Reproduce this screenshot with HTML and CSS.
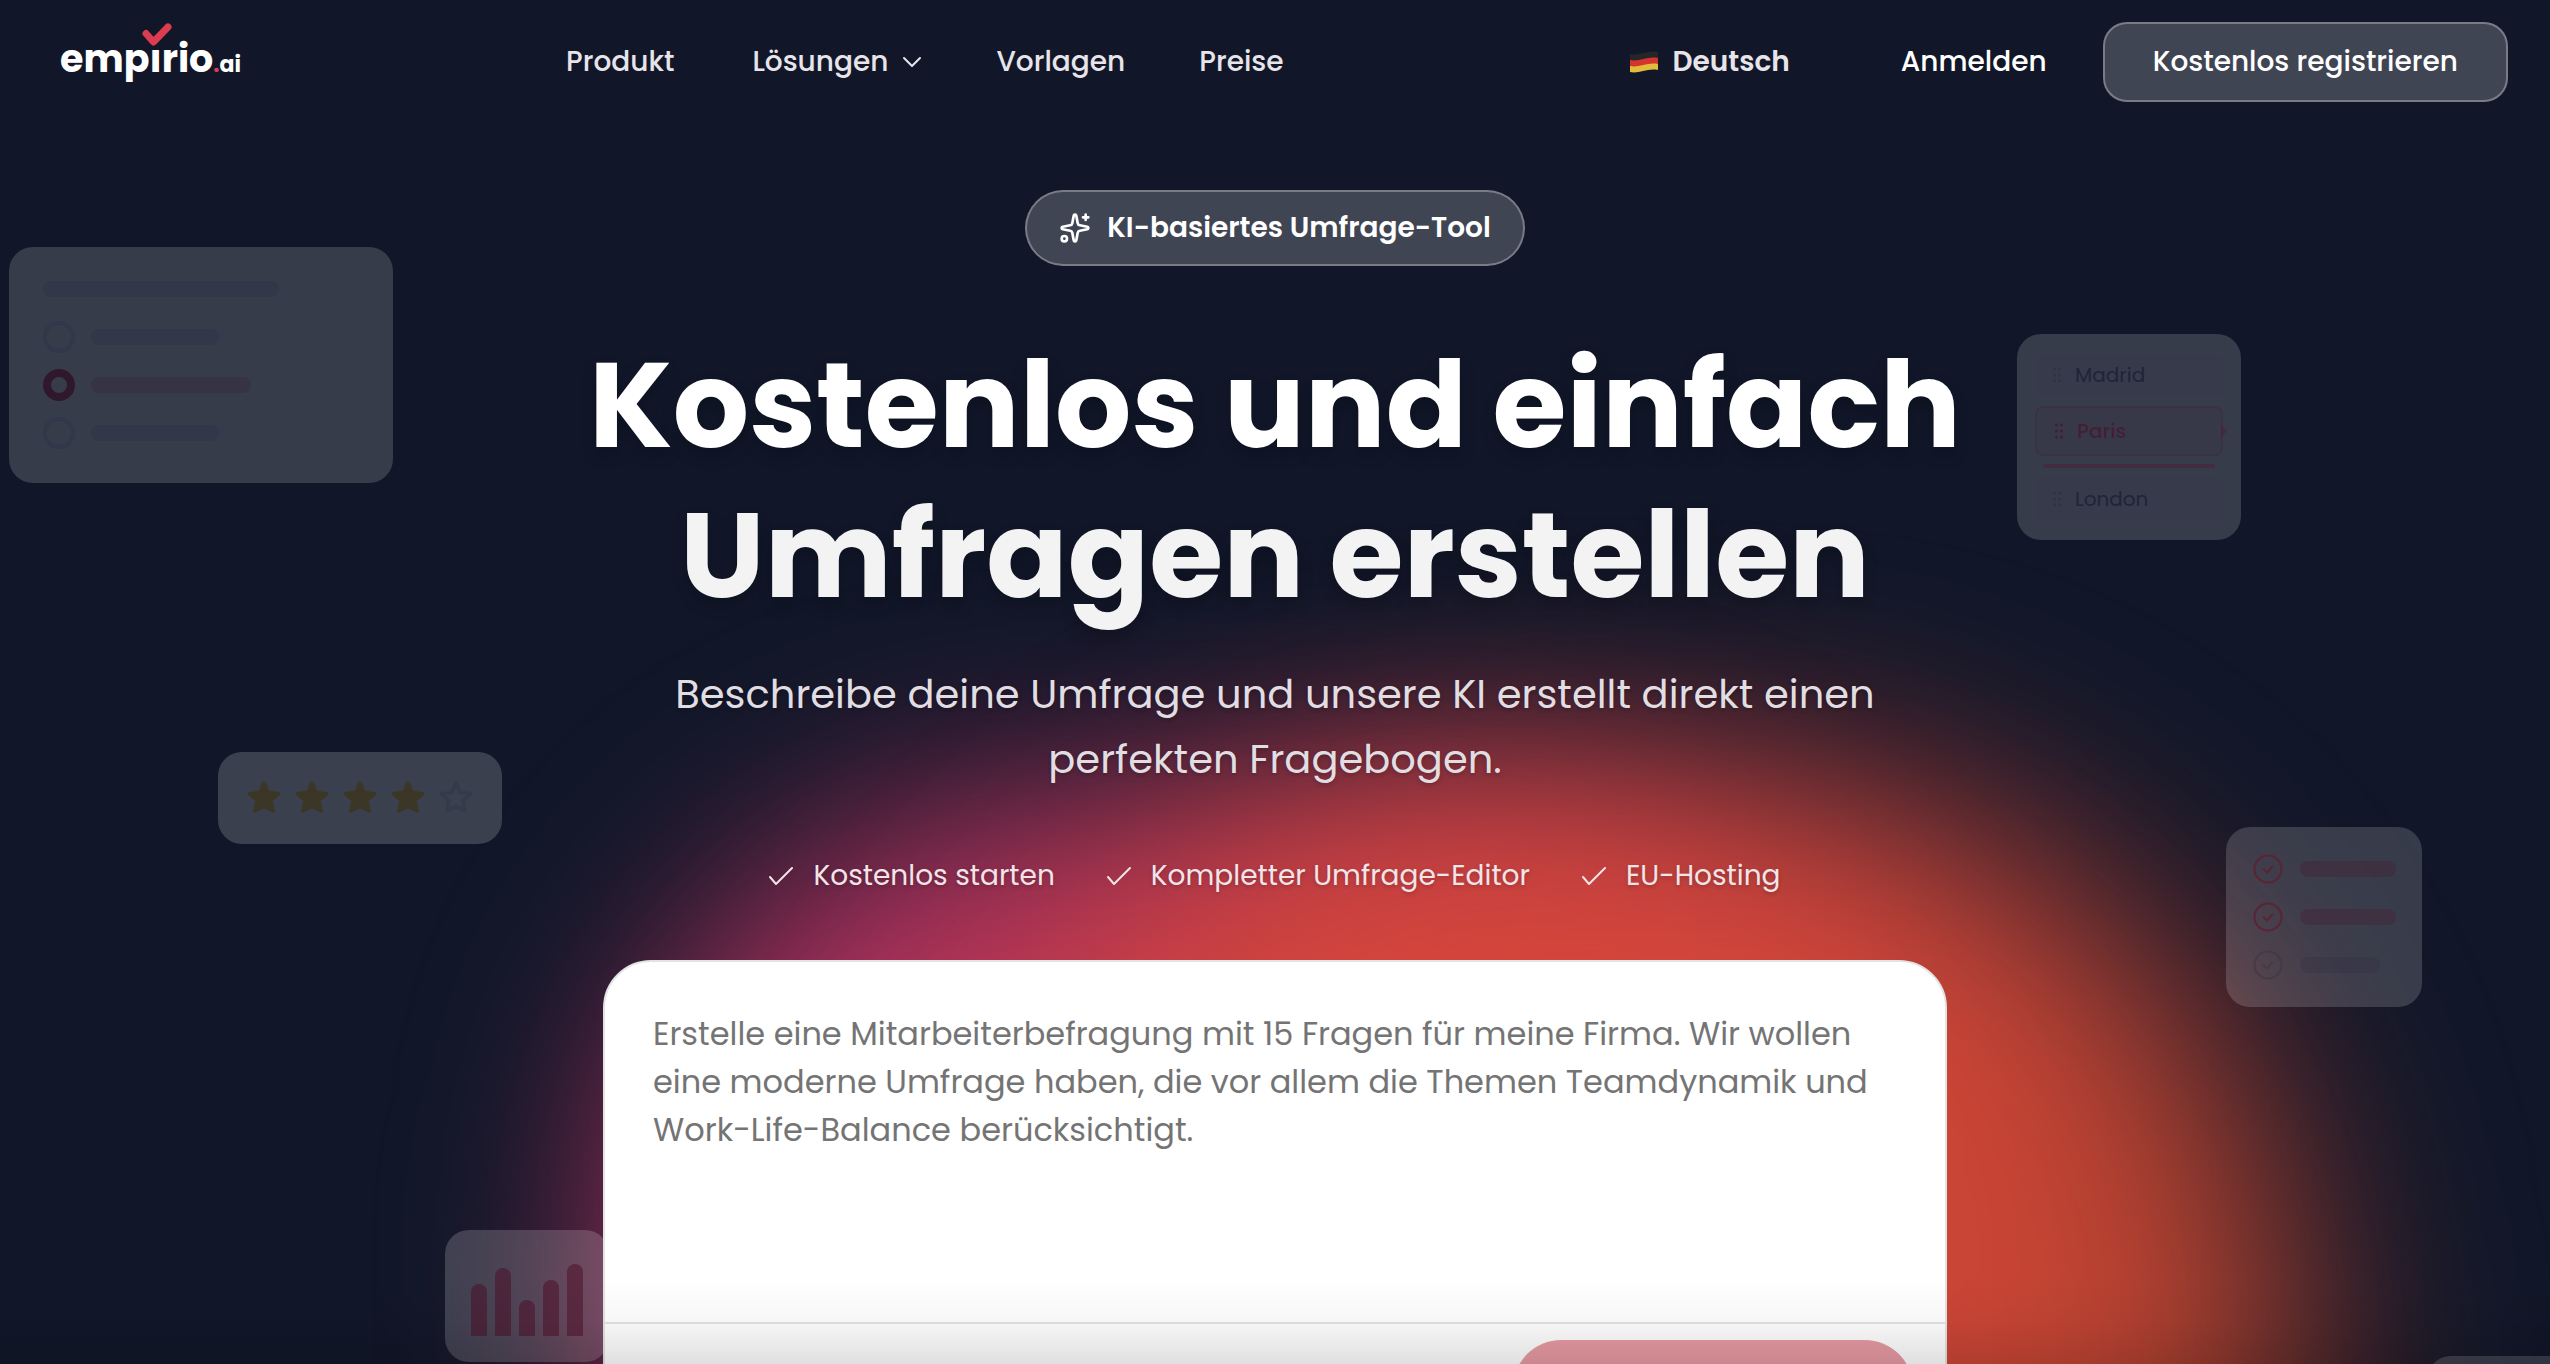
FILE: index.html
```html
<!doctype html>
<html lang="de">
  <head>
    <meta charset="utf-8" />
    <title>empirio.ai - Kostenlos und einfach Umfragen erstellen</title>
    <meta name="viewport" content="width=device-width, initial-scale=1.0" />
    <link rel="stylesheet" href="styles.css">
  </head>
  <body>
    <div class="page">
      <div class="glow" aria-hidden="true">
        <div class="glow-pink"></div>
        <div class="glow-orange"></div>
      </div>

      <!-- floating survey cards -->
      <div class="floats" aria-hidden="true">
        <div class="float float-radio">
          <div class="bar bar-title"></div>
          <div class="row"><i class="dot"></i><div class="bar"></div></div>
          <div class="row active"><i class="dot"></i><div class="bar"></div></div>
          <div class="row"><i class="dot"></i><div class="bar"></div></div>
        </div>

        <div class="float float-rank">
          <div class="rank">
            <svg width="8" height="16" viewBox="0 0 8 16"><circle cx="1.5" cy="2" r="1.5" /><circle cx="6.5" cy="2" r="1.5" /><circle cx="1.5" cy="8" r="1.5" /><circle cx="6.5" cy="8" r="1.5" /><circle cx="1.5" cy="14" r="1.5" /><circle cx="6.5" cy="14" r="1.5" /></svg>
            <span>Madrid</span>
          </div>
          <div class="rank rank-active">
            <svg width="8" height="16" viewBox="0 0 8 16"><circle cx="1.5" cy="2" r="1.5" /><circle cx="6.5" cy="2" r="1.5" /><circle cx="1.5" cy="8" r="1.5" /><circle cx="6.5" cy="8" r="1.5" /><circle cx="1.5" cy="14" r="1.5" /><circle cx="6.5" cy="14" r="1.5" /></svg>
            <span>Paris</span>
          </div>
          <div class="drop-line"></div>
          <div class="rank">
            <svg width="8" height="16" viewBox="0 0 8 16"><circle cx="1.5" cy="2" r="1.5" /><circle cx="6.5" cy="2" r="1.5" /><circle cx="1.5" cy="8" r="1.5" /><circle cx="6.5" cy="8" r="1.5" /><circle cx="1.5" cy="14" r="1.5" /><circle cx="6.5" cy="14" r="1.5" /></svg>
            <span>London</span>
          </div>
        </div>

        <div class="float float-stars">
          <svg class="star" viewBox="0 0 24 24"><path d="M12 3l2.6 5.7 6.2.7-4.6 4.2 1.3 6.2L12 16.9l-5.5 2.9 1.3-6.2-4.6-4.2 6.2-.7z" /></svg>
          <svg class="star" viewBox="0 0 24 24"><path d="M12 3l2.6 5.7 6.2.7-4.6 4.2 1.3 6.2L12 16.9l-5.5 2.9 1.3-6.2-4.6-4.2 6.2-.7z" /></svg>
          <svg class="star" viewBox="0 0 24 24"><path d="M12 3l2.6 5.7 6.2.7-4.6 4.2 1.3 6.2L12 16.9l-5.5 2.9 1.3-6.2-4.6-4.2 6.2-.7z" /></svg>
          <svg class="star" viewBox="0 0 24 24"><path d="M12 3l2.6 5.7 6.2.7-4.6 4.2 1.3 6.2L12 16.9l-5.5 2.9 1.3-6.2-4.6-4.2 6.2-.7z" /></svg>
          <svg class="star star-empty" viewBox="0 0 24 24"><path d="M12 3l2.6 5.7 6.2.7-4.6 4.2 1.3 6.2L12 16.9l-5.5 2.9 1.3-6.2-4.6-4.2 6.2-.7z" /></svg>
        </div>

        <div class="float float-checks">
          <div class="row active">
            <svg class="tick" viewBox="0 0 32 32"><circle cx="16" cy="16" r="13.5" /><path d="M11.500 16l3.500 3.500 5.500-6" /></svg>
            <div class="bar"></div>
          </div>
          <div class="row active">
            <svg class="tick" viewBox="0 0 32 32"><circle cx="16" cy="16" r="13.5" /><path d="M11.500 16l3.500 3.500 5.500-6" /></svg>
            <div class="bar"></div>
          </div>
          <div class="row">
            <svg class="tick" viewBox="0 0 32 32"><circle cx="16" cy="16" r="13.5" /><path d="M11.500 16l3.500 3.500 5.500-6" /></svg>
            <div class="bar"></div>
          </div>
        </div>

        <div class="float float-chart">
          <i style="height: 52px"></i>
          <i style="height: 68px"></i>
          <i style="height: 36px"></i>
          <i style="height: 56px"></i>
          <i style="height: 72px"></i>
        </div>

        <div class="float float-corner"></div>
      </div>

      <header class="header">
        <a href="/" class="logo">
          <svg class="logo-check" width="30" height="23" viewBox="0 0 30 23"><path d="M4 10.500l7.500 8.500L26 4" /></svg>
          <span>empırio</span><span class="logo-dot">.</span><span class="logo-ai">ai</span>
        </a>
        <nav class="nav">
          <a href="/produkt">Produkt</a>
          <a href="/loesungen" class="nav-drop">Lösungen
            <svg width="20" height="12" viewBox="0 0 20 12"><path d="M2 2l8 8 8-8" /></svg>
          </a>
          <a href="/vorlagen">Vorlagen</a>
          <a href="/preise">Preise</a>
        </nav>
        <div class="actions">
          <button type="button" class="lang">
            <svg width="28" height="22" viewBox="0 0 28 22">
              <path fill="#26262a" d="M0 3c9 2 17-4 28-2v7c-11-2-19 4-28 2z" />
              <path fill="#d3352e" d="M0 9c9 2 17-4 28-2v7c-11-2-19 4-28 2z" />
              <path fill="#e2bd3c" d="M0 15c9 2 17-4 28-2v6c-11-2-19 4-28 2z" />
            </svg>
            Deutsch
          </button>
          <a href="/login" class="login">Anmelden</a>
          <a href="/register" class="register">Kostenlos registrieren</a>
        </div>
      </header>

      <main class="hero">
        <div class="badge">
          <svg width="32" height="32" viewBox="0 0 24 24"><path d="M11.017 2.814a1 1 0 0 1 1.966 0l1.051 5.558a2 2 0 0 0 1.594 1.594l5.558 1.051a1 1 0 0 1 0 1.966l-5.558 1.051a2 2 0 0 0-1.594 1.594l-1.051 5.558a1 1 0 0 1-1.966 0l-1.051-5.558a2 2 0 0 0-1.594-1.594l-5.558-1.051a1 1 0 0 1 0-1.966l5.558-1.051a2 2 0 0 0 1.594-1.594zM20 2v4M22 4h-4" /><circle cx="4" cy="20" r="2" /></svg>
          KI-basiertes Umfrage-Tool
        </div>
        <h1><span>Kostenlos und einfach</span> <span class="second">Umfragen erstellen</span></h1>
        <p class="lead">Beschreibe deine Umfrage und unsere KI erstellt direkt einen<br />perfekten Fragebogen.</p>
        <ul class="benefits">
          <li><svg width="24" height="20" viewBox="0 0 24 20"><path d="M1 11l6 7L23 2" /></svg>Kostenlos starten</li>
          <li><svg width="24" height="20" viewBox="0 0 24 20"><path d="M1 11l6 7L23 2" /></svg>Kompletter Umfrage-Editor</li>
          <li><svg width="24" height="20" viewBox="0 0 24 20"><path d="M1 11l6 7L23 2" /></svg>EU-Hosting</li>
        </ul>
        <form class="prompt">
          <textarea aria-label="Beschreibe deine Umfrage" placeholder="Erstelle eine Mitarbeiterbefragung mit 15 Fragen für meine Firma. Wir wollen&#10;eine moderne Umfrage haben, die vor allem die Themen Teamdynamik und&#10;Work-Life-Balance berücksichtigt."></textarea>
          <div class="prompt-footer">
            <button type="submit" aria-label="Umfrage erstellen"></button>
          </div>
        </form>
      </main>
      <div class="fade"></div>
    </div>
  </body>
</html>
```
FILE: styles.css
```css
:root {
  --font-normal: Poppins, Inter, "Liberation Sans", sans-serif;
  --color-bg: #111729;
  --color-text: #ffffff;
  --color-muted: #e7e5e9;
  --color-red: #dc3c50;
  --glass: rgba(255, 255, 255, 0.2);
  --glass-border: rgba(255, 255, 255, 0.3);
  --bar: rgba(35, 38, 68, 0.25);
  --bar-active: rgba(50, 15, 35, 0.2);
  --ring-active: rgba(46, 12, 34, 0.75);
}
* {
  margin: 0;
  padding: 0;
  box-sizing: border-box;
}
body {
  background: var(--color-bg);
  color: var(--color-text);
  font-family: var(--font-normal);
  font-size: 28px;
}
a {
  color: inherit;
  text-decoration: none;
}
button,
textarea {
  font: inherit;
  color: inherit;
  background: none;
  border: 0;
}
svg {
  flex: none;
  fill: none;
  stroke: currentColor;
  stroke-linecap: round;
  stroke-linejoin: round;
  stroke-width: 2;
}
.page {
  position: relative;
  height: 100vh;
  overflow: hidden;
}

/* background */
.glow,
.floats {
  position: absolute;
  inset: 0;
}
.glow-pink,
.glow-orange {
  position: absolute;
}
.glow-pink {
  left: 24%;
  top: 800px;
  width: 50%;
  height: 1400px;
  border-radius: 420px;
  background: #b0325e;
  filter: blur(100px);
}
.glow-orange {
  left: 37%;
  top: 780px;
  width: 53%;
  height: 1500px;
  border-radius: 560px;
  background: linear-gradient(90deg, #d5463a 65%, #b0422c);
  filter: blur(110px);
}
.fade {
  position: absolute;
  inset: auto 0 0;
  height: 88px;
  background: linear-gradient(transparent, rgba(0, 0, 0, 0.03) 50%, rgba(0, 0, 0, 0.12));
}

/* floating cards */
.float {
  position: absolute;
  border-radius: 24px;
  background: rgba(255, 255, 255, 0.16);
}
.row {
  display: flex;
  align-items: center;
  gap: 16px;
}
.bar {
  height: 16px;
  width: 128px;
  border-radius: 8px;
  background: var(--bar);
}
.active .bar {
  background: var(--bar-active);
}
.float-radio {
  left: 9px;
  top: 247px;
  width: 384px;
  padding: 34px;
  display: flex;
  flex-direction: column;
  gap: 16px;
}
.float-radio .bar-title {
  width: 236px;
  margin-bottom: 8px;
}
.float-radio .active .bar {
  width: 160px;
}
.dot {
  width: 32px;
  height: 32px;
  border: 4px solid var(--bar);
  border-radius: 50%;
}
.active .dot {
  border: 8px solid var(--ring-active);
}
.float-rank {
  right: 309px;
  top: 334px;
  width: 224px;
  padding: 20px 18px;
  font-size: 20px;
  color: #1f2439;
}
.rank {
  display: flex;
  align-items: center;
  gap: 14px;
  height: 42px;
  padding-left: 18px;
  border-radius: 8px;
  background: rgba(34, 38, 72, 0.05);
}
.rank svg {
  fill: currentColor;
  stroke: none;
  opacity: 0.3;
}
.rank-active {
  position: relative;
  height: 50px;
  margin: 10px 0 8px;
  border: 2px solid rgba(80, 20, 50, 0.2);
  background: rgba(60, 20, 50, 0.06);
  color: #431f35;
  font-weight: 500;
}
.rank-active svg {
  opacity: 1;
}
.rank-active::after {
  content: "";
  position: absolute;
  left: 100%;
  border: 6px solid transparent;
  border-left-color: rgba(80, 20, 50, 0.4);
}
.drop-line {
  height: 4px;
  margin: 0 8px 10px;
  border-radius: 2px;
  background: #432c40;
}
.float-stars {
  left: 218px;
  top: 752px;
  display: flex;
  gap: 8px;
  padding: 26px;
  background: rgba(255, 255, 255, 0.18);
}
.star {
  width: 40px;
  height: 40px;
  color: #3b3626;
  fill: currentColor;
}
.star-empty {
  color: #343a4b;
  fill: none;
}
.float-checks {
  right: 128px;
  top: 827px;
  width: 196px;
  padding: 26px;
  display: flex;
  flex-direction: column;
  gap: 16px;
}
.float-checks .bar {
  width: 96px;
  background: rgba(40, 38, 60, 0.2);
}
.float-checks .active .bar {
  background: rgba(75, 15, 40, 0.25);
}
.float-checks .row:last-child .bar {
  width: 80px;
}
.tick {
  width: 32px;
  height: 32px;
  color: rgba(50, 40, 55, 0.3);
}
.active .tick {
  color: #5a2434;
}
.float-chart {
  left: 445px;
  top: 1230px;
  display: flex;
  align-items: flex-end;
  gap: 8px;
  width: 164px;
  height: 132px;
  padding: 26px;
  background: rgba(255, 255, 255, 0.18);
}
.float-chart i {
  flex: 1;
  border-radius: 8px 8px 0 0;
  background: rgba(75, 10, 35, 0.5);
}
.float-corner {
  right: -57px;
  top: 1356px;
  width: 180px;
  height: 120px;
}

/* header */
.header {
  position: relative;
  display: flex;
  align-items: center;
  padding: 22px 42px 0 60px;
  font-weight: 500;
}
.logo {
  position: relative;
  display: flex;
  align-items: baseline;
  width: 506px;
  font-size: 38px;
  font-weight: 700;
  line-height: 48px;
}
.logo-check {
  position: absolute;
  left: 82px;
  top: -12px;
  stroke: var(--color-red);
  stroke-width: 7;
}
.logo-dot {
  font-size: 22px;
  color: var(--color-red);
}
.logo-ai {
  font-size: 22px;
}
.nav {
  display: flex;
  gap: 74px;
  color: var(--color-muted);
}
.nav a {
  display: flex;
  align-items: center;
}
.nav .nav-drop {
  gap: 14px;
  margin-left: 4px;
}
.actions {
  display: flex;
  align-items: center;
  gap: 56px;
  margin-left: auto;
}
.lang {
  display: flex;
  align-items: center;
  gap: 14px;
  margin-right: 55px;
  color: var(--color-muted);
  font-weight: 600;
}
.lang svg {
  stroke: none;
}
.register {
  padding: 0 48px;
  border: 2px solid var(--glass-border);
  border-radius: 24px;
  background: var(--glass);
  line-height: 76px;
}

/* hero */
.hero {
  position: relative;
  display: flex;
  flex-direction: column;
  align-items: center;
  padding-top: 88px;
  text-align: center;
}
.badge {
  display: flex;
  align-items: center;
  gap: 16px;
  height: 76px;
  padding: 0 32px;
  border: 2px solid var(--glass-border);
  border-radius: 38px;
  background: var(--glass);
  font-weight: 600;
}
h1 {
  margin-top: 64px;
  font-size: 120px;
  font-weight: 700;
  line-height: 150px;
  text-shadow: 0 8px 16px rgba(0, 0, 0, 0.2);
}
h1 span {
  display: block;
}
h1 .second {
  color: #f3f3f3;
}
.lead {
  margin-top: 32px;
  font-size: 40px;
  line-height: 65px;
  color: #e0dee2;
  text-shadow: 0 2px 4px rgba(0, 0, 0, 0.2);
}
.benefits {
  display: flex;
  gap: 52px;
  margin-top: 62px;
  list-style: none;
  line-height: 44px;
  color: #f2e4e8;
  text-shadow: 0 2px 4px rgba(0, 0, 0, 0.2);
}
.benefits li {
  display: flex;
  align-items: center;
  gap: 20px;
}
.prompt {
  width: 1344px;
  max-width: 100%;
  margin-top: 62px;
  border: 2px solid #e3e3e3;
  border-radius: 48px;
  background: #ffffff;
}
.prompt textarea {
  display: block;
  width: 100%;
  height: 360px;
  padding: 48px;
  resize: none;
  outline: 0;
  font-size: 32px;
  line-height: 48px;
}
.prompt textarea::placeholder {
  color: #747474;
}
.prompt-footer {
  display: flex;
  justify-content: flex-end;
  padding: 16px 32px;
  border-top: 2px solid #e3e3e3;
}
.prompt-footer button {
  width: 400px;
  height: 96px;
  border-radius: 48px;
  background: #e79aa3;
}
```
